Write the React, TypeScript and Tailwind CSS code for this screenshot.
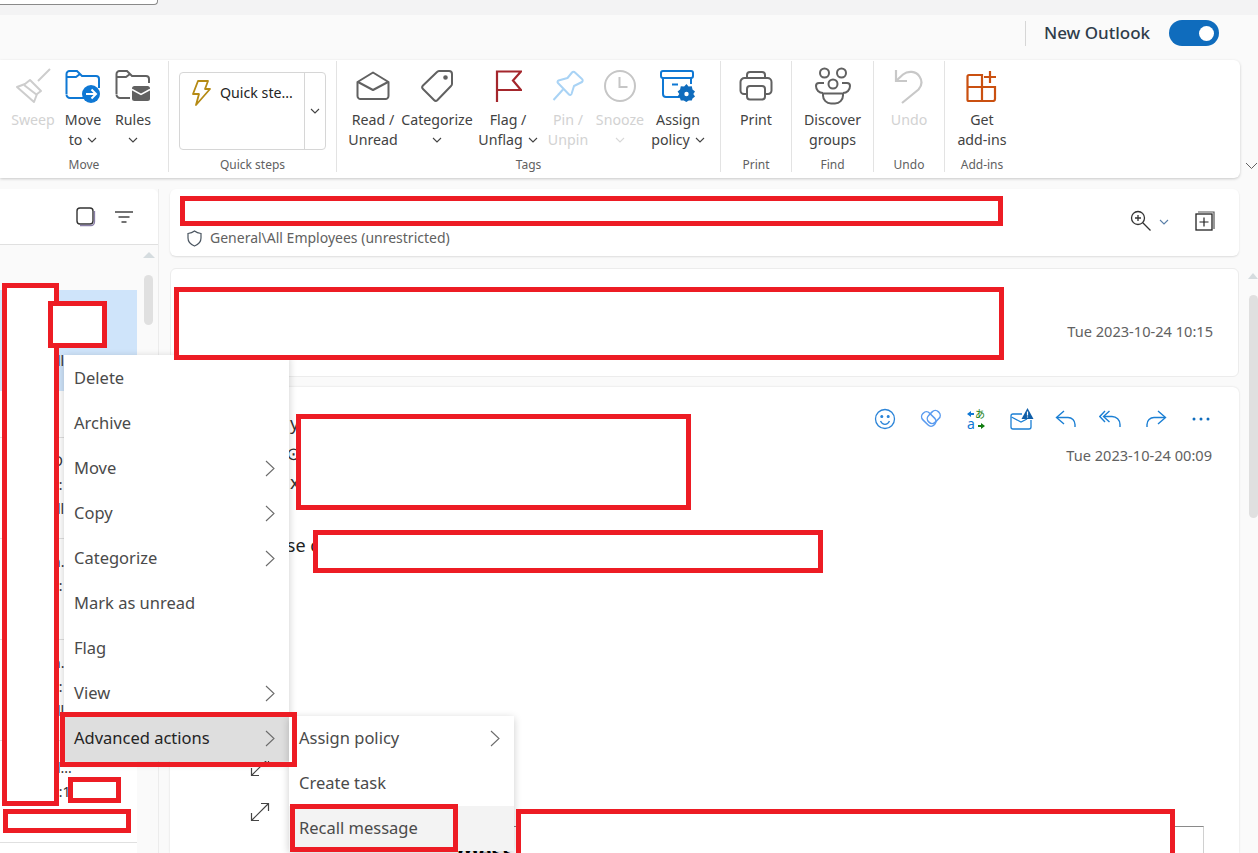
import React from "react";

const Chev = ({ c = "#424242" }: { c?: string }) => (
  <svg width="10" height="6" viewBox="0 0 10 6" className="shrink-0" fill="none">
    <path d="M1 1l4 4 4-4" stroke={c} strokeWidth="1.1" />
  </svg>
);

const MenuChev = () => (
  <svg width="10" height="17" viewBox="0 0 10 17" fill="none" className="shrink-0">
    <path d="M1 1l8 7.5-8 7.5" stroke="#6b6b6b" strokeWidth="1.1" />
  </svg>
);

const G = "#616161";
const B = "#0f78d4";
const D = "#cdcdcd";

const Sweep = () => (
  <svg width="36" height="36" viewBox="0 0 36 36" fill="none" stroke={D} strokeWidth="2" strokeLinejoin="round">
    <path d="M35 1L23 13" />
    <path d="M15 12l11 11-4 3-3 8L2 19l8-3z" />
    <path d="M9 17l13 10" />
  </svg>
);
const MoveTo = () => (
  <svg width="36" height="36" viewBox="0 0 36 36" fill="none">
    <path d="M1.500 26V6a3 3 0 0 1 3-3h7.500l5 5h14a3 3 0 0 1 3 3v9M1.500 9h9.500l4-3M19 30H5a3.500 3.500 0 0 1-3.500-3.500" stroke={B} strokeWidth="2" />
    <circle cx="26" cy="26" r="9" fill={B} />
    <path d="M21 26h9M26.500 21.500L31 26l-4.500 4.500" stroke="#fff" strokeWidth="2" />
  </svg>
);
const Rules = () => (
  <svg width="36" height="36" viewBox="0 0 36 36" fill="none">
    <path d="M1.500 26V6a3 3 0 0 1 3-3h7.500l5 5h14a3 3 0 0 1 3 3v4M1.500 9h9.500l4-3M15 30H5a3.500 3.500 0 0 1-3.500-3.500" stroke={G} strokeWidth="2" />
    <rect x="17" y="18" width="18" height="15" rx="2.500" fill={G} />
    <path d="M17 21.500l9 5 9-5" stroke="#fff" strokeWidth="1.500" />
  </svg>
);
const Bolt = () => (
  <svg width="20" height="26" viewBox="0 0 20 26" fill="none">
    <path d="M7 1h10l-3 8h5L5 25l3-11H2z" stroke="#b58a14" strokeWidth="1.800" strokeLinejoin="round" />
  </svg>
);
const Envelope = () => (
  <svg width="34" height="30" viewBox="0 0 34 30" fill="none" stroke={G} strokeWidth="2" strokeLinejoin="round">
    <path d="M1.500 11L17 1.500 32.500 11v14a3 3 0 0 1-3 3h-25a3 3 0 0 1-3-3z" />
    <path d="M2 11l15 8 15-8" />
  </svg>
);
const TagIcon = () => (
  <svg width="34" height="34" viewBox="0 0 34 34" fill="none" stroke={G} strokeWidth="2" strokeLinejoin="round">
    <path d="M19 2h10a3 3 0 0 1 3 3v10a3 3 0 0 1-1 2L17.500 31a2.500 2.500 0 0 1-3.500 0L3 20a2.500 2.500 0 0 1 0-3.500L17 3a3 3 0 0 1 2-1z" />
    <circle cx="25.500" cy="8.500" r="1.300" fill={G} />
  </svg>
);
const FlagIcon = () => (
  <svg width="28" height="32" viewBox="0 0 28 32" fill="none" stroke="#a4262c" strokeWidth="2.200">
    <path d="M3 32V1.500h24l-8 9 8 9.500H3" />
  </svg>
);
const PinIcon = () => (
  <svg width="32" height="32" viewBox="0 0 32 32" fill="none" stroke="#a9d3f5" strokeWidth="2" strokeLinejoin="round">
    <path d="M20 2.500a2 2 0 0 1 3 0l7 6.500a2 2 0 0 1 0 3l-8 4-2.500 8a1.500 1.500 0 0 1-2.500.5L6 13a1.500 1.500 0 0 1 .5-2.500l9-2.500z" />
    <path d="M11 19.500L1.500 30" />
  </svg>
);
const ClockIcon = () => (
  <svg width="34" height="34" viewBox="0 0 34 34" fill="none" stroke="#c6c6c6" strokeWidth="2">
    <circle cx="17" cy="17" r="15" />
    <path d="M16.500 8v10h8" />
  </svg>
);
const PolicyIcon = () => (
  <svg width="36" height="32" viewBox="0 0 36 32" fill="none">
    <rect x="1" y="1" width="32" height="7" rx="2" stroke={B} strokeWidth="2" />
    <path d="M3 8v16a3 3 0 0 0 3 3h13M31 8v6M12 14.500h6" stroke={B} strokeWidth="2" />
    <path d="M26.500 14l2 2.500 3.300-.3.700 3.200 2.500 2.100-1.700 2.500 1.700 2.500-2.500 2.100-.7 1.900h-3l-2.500 1.500-2.500-1.500h-3l-.7-1.900-2.500-2.100 1.700-2.500-1.700-2.500 2.500-2.100.7-3.200 3.300.3z" fill="#0f6cbd" />
    <circle cx="26.500" cy="24" r="2.200" fill="#fff" />
  </svg>
);
const PrinterIcon = () => (
  <svg width="34" height="30" viewBox="0 0 34 30" fill="none" stroke={G} strokeWidth="2" strokeLinejoin="round">
    <path d="M8 7V4a3 3 0 0 1 3-3h12a3 3 0 0 1 3 3v3" />
    <path d="M8 23H5a3.500 3.500 0 0 1-3.500-3.500V11A4 4 0 0 1 5.500 7h23a4 4 0 0 1 4 4v8.500A3.500 3.500 0 0 1 29 23h-3" />
    <rect x="8" y="15" width="18" height="13.500" rx="3" />
  </svg>
);
const GroupsIcon = () => (
  <svg width="38" height="38" viewBox="0 0 38 38" fill="none" stroke={G} strokeWidth="2">
    <circle cx="10.500" cy="6" r="4.500" />
    <circle cx="27.500" cy="6" r="4.500" />
    <circle cx="19" cy="17" r="4.500" />
    <path d="M9 26c-4 0-7-3-7-7 0-2 1-3 3-3h5M29 26c4 0 7-3 7-7 0-2-1-3-3-3h-5" />
    <path d="M9 26.500h20v2a8 8 0 0 1-8 8h-4a8 8 0 0 1-8-8z" />
  </svg>
);
const UndoIcon = () => (
  <svg width="30" height="36" viewBox="0 0 30 36" fill="none" stroke="#c8c8c8" strokeWidth="2.200">
    <path d="M2 2v11h11" />
    <path d="M2.500 12.500L9 6.500c5-4 13-3.500 16.500 2 3 4.500 2 9.500-1 13L8 35" />
  </svg>
);
const AddInIcon = () => (
  <svg width="32" height="32" viewBox="0 0 32 32" fill="none" stroke="#ca5010" strokeWidth="2.200">
    <path d="M16 5H3a1.500 1.500 0 0 0-1.500 1.500v23.500a1 1 0 0 0 1 1H27a2 2 0 0 0 2-2V17H16zM16 5v26M1.500 17H16" />
    <path d="M24 1v12M18 7h12" />
  </svg>
);

type Line = { t: string; chev?: boolean };
const Btn = ({ w, icon, lines, chevOnly, off }: { w: string; icon: React.ReactNode; lines: Line[]; chevOnly?: boolean; off?: boolean }) => (
  <div className={`${w} flex flex-col items-center shrink-0 text-[14.200px] leading-[20px] whitespace-nowrap ${off ? "text-[#d2d2d2]" : "text-[#424242]"}`}>
    <div className="h-[48px] pt-[2px] flex items-center justify-center">{icon}</div>
    <div className="h-[1px]" />
    {lines.map((l) => (
      <div key={l.t} className="flex items-center gap-[5px]">
        <span>{l.t}</span>
        {l.chev && <Chev />}
      </div>
    ))}
    {chevOnly && (
      <div className="h-[20px] flex items-center">
        <Chev c={off ? "#d8d8d8" : "#424242"} />
      </div>
    )}
  </div>
);

const Group = ({ w, label, children, border = true }: { w: string; label: string; children: React.ReactNode; border?: boolean }) => (
  <div className={`${w} h-[111px] shrink-0 flex flex-col ${border ? "border-r border-[#e3e3e3]" : ""}`}>
    <div className="flex flex-1 min-h-0">{children}</div>
    <div className="h-[16px] text-center text-[12px] leading-[18px] text-[#616161] whitespace-nowrap">{label}</div>
  </div>
);

const ListItem = ({ lines, selected, h, pt = "pt-[11px]" }: { lines: string[]; selected?: boolean; h: string; pt?: string }) => (
  <div className={`${h} ${pt} shrink-0 pl-[52px] text-[14px] leading-[24px] text-[#333] whitespace-nowrap overflow-hidden border-b ${selected ? "bg-[#cfe4fa] border-[#cfe4fa]" : "bg-white border-[#e0e0e0]"}`}>
    {lines.map((l, i) => (
      <div key={i}>{l}</div>
    ))}
  </div>
);

const Smile = () => (
  <svg width="22" height="22" viewBox="0 0 22 22" fill="none" stroke="#2b84d8" strokeWidth="1.300">
    <circle cx="11" cy="11" r="9.500" />
    <path d="M6.500 13c1 2.300 2.800 3.300 4.500 3.300s3.500-1 4.500-3.300" />
    <circle cx="7.800" cy="8.500" r=".9" fill="#2b84d8" />
    <circle cx="14.200" cy="8.500" r=".9" fill="#2b84d8" />
  </svg>
);
const Viva = () => (
  <svg width="22" height="22" viewBox="0 0 22 22" fill="none" stroke="#5a9bef" strokeWidth="1.500">
    <rect x="4" y="3" width="9.500" height="16" rx="4.500" transform="rotate(-45 8.750 11)" />
    <rect x="9" y="2" width="9.500" height="14" rx="4.500" transform="rotate(45 13.750 9)" />
  </svg>
);
const Translate = () => (
  <svg width="22" height="22" viewBox="0 0 22 22" className="overflow-visible">
    <text x="9" y="10" fontSize="10" fill="#107c10" fontFamily="'Noto Sans CJK JP',sans-serif">あ</text>
    <text x="1" y="21" fontSize="14" fill="#0f78d4" fontFamily="'Noto Sans',sans-serif">a</text>
    <path d="M1 6l4-3v2h3v2H5v2z" fill="#0f78d4" />
    <path d="M19 18l-4 3v-2h-3v-2h3v-2z" fill="#107c10" />
  </svg>
);
const MailAlert = () => (
  <svg width="24" height="22" viewBox="0 0 24 22" fill="none">
    <path d="M12 6H3a2 2 0 0 0-2 2v11a2 2 0 0 0 2 2h16a2 2 0 0 0 2-2v-7" stroke="#1b7fd4" strokeWidth="1.300" />
    <path d="M1.500 9l9.500 5 6-3" stroke="#1b7fd4" strokeWidth="1.300" />
    <path d="M17.500 0l6 11h-12z" fill="#0f5ea8" />
    <path d="M17.500 3.500v4M17.500 8.500v1" stroke="#fff" strokeWidth="1.200" />
  </svg>
);
const Reply = () => (
  <svg width="22" height="18" viewBox="0 0 22 18" fill="none" stroke="#1b7fd4" strokeWidth="1.400">
    <path d="M9 1L1.500 7.500 9 14" />
    <path d="M2 7.500h11a7 7 0 0 1 7 7V17" />
  </svg>
);
const ReplyAll = () => (
  <svg width="22" height="18" viewBox="0 0 22 18" fill="none" stroke="#1b7fd4" strokeWidth="1.400">
    <path d="M6 1L0.800 6.500 6 12" />
    <path d="M10.500 1L4.500 6.500 10.500 12" />
    <path d="M5 6.500h8a8 8 0 0 1 8 8V17" />
  </svg>
);
const Forward = () => (
  <svg width="22" height="18" viewBox="0 0 22 18" fill="none" stroke="#1b7fd4" strokeWidth="1.400">
    <path d="M13 1l7.500 6.500L13 14" />
    <path d="M20 7.500H9a7 7 0 0 0-7 7V17" />
  </svg>
);
const Dots = () => (
  <svg width="18" height="4" viewBox="0 0 18 4" fill="#0f6cbd">
    <circle cx="2" cy="2" r="1.500" />
    <circle cx="9" cy="2" r="1.500" />
    <circle cx="16" cy="2" r="1.500" />
  </svg>
);
const Expand = () => (
  <svg width="20" height="20" viewBox="0 0 20 20" fill="none" stroke="#444" strokeWidth="1.200">
    <path d="M1.500 18.500L18.500 1.500M11 1.500h7.500V9M1.500 11v7.500H9" />
  </svg>
);
const Shield = () => (
  <svg width="15" height="17" viewBox="0 0 15 17" fill="none" stroke="#4a5560" strokeWidth="1.200">
    <path d="M7.500 1C5.500 2.700 3.500 3.300 1 3.500V8c0 3.500 2.500 6.500 6.500 8 4-1.500 6.500-4.500 6.500-8V3.500C11.500 3.300 9.500 2.700 7.500 1z" />
  </svg>
);
const ZoomIcon = () => (
  <svg width="22" height="21" viewBox="0 0 22 21" fill="none" stroke="#333" strokeWidth="1.300">
    <circle cx="8" cy="8" r="6.500" />
    <path d="M12.800 12.800L20.500 20.500M8 5v6M5 8h6" />
  </svg>
);
const PopOut = () => (
  <svg width="20" height="20" viewBox="0 0 20 20" fill="none">
    <path d="M3 1h16v17" stroke="#555" strokeWidth="1.200" />
    <rect x="1" y="3" width="16" height="16" stroke="#222" strokeWidth="1.300" />
    <path d="M9 6.500v9M4.500 11h9" stroke="#222" strokeWidth="1.200" />
  </svg>
);

const menuRows: { t: string; more?: boolean }[] = [
  { t: "Delete" },
  { t: "Archive" },
  { t: "Move", more: true },
  { t: "Copy", more: true },
  { t: "Categorize", more: true },
  { t: "Mark as unread" },
  { t: "Flag" },
  { t: "View", more: true },
];

export default function App() {
  return (
    <div className="relative w-[1258px] h-[853px] overflow-hidden bg-[#fafafa] flex flex-col font-['Noto_Sans',sans-serif]">
      {/* window strip */}
      <div className="h-[15px] shrink-0 bg-[#f3f3f4]">
        <div className="w-[158px] h-[5px] bg-white border-b border-r border-[#8a8a8a] rounded-br-[4px]" />
      </div>

      {/* top bar */}
      <div className="h-[45px] shrink-0 flex items-center justify-end pr-[39px] pb-[9px]">
        <div className="w-px h-[25px] bg-[#d6d6d6]" />
        <span className="ml-[18px] w-[125px] text-[17px] font-medium text-[#2f3d4a] whitespace-nowrap">New Outlook</span>
        <div className="w-[50px] h-[26px] rounded-full bg-[#0f6cbd] flex items-center justify-end pr-[5px]">
          <div className="w-[15px] h-[15px] rounded-full bg-white" />
        </div>
      </div>

      {/* ribbon */}
      <div className="h-[118px] shrink-0 flex items-start">
        <div className="w-[1240px] h-[118px] pt-px bg-white rounded-r-[6px] shadow-[0_1px_3px_rgba(0,0,0,0.2)] flex">
          <Group w="w-[169px]" label="Move">
            <div className="w-[8px] shrink-0" />
            <Btn w="w-[50px]" icon={<Sweep />} lines={[{ t: "Sweep" }]} off />
            <Btn w="w-[50px]" icon={<MoveTo />} lines={[{ t: "Move" }, { t: "to", chev: true }]} />
            <Btn w="w-[50px]" icon={<Rules />} lines={[{ t: "Rules" }]} chevOnly />
          </Group>
          <Group w="w-[168px]" label="Quick steps">
            <div className="ml-[10px] mt-[11px] w-[147px] h-[78px] border border-[#d6d6d6] rounded-[4px] flex">
              <div className="flex-1 flex items-start gap-[9px] pl-[11px] pt-[7px]">
                <Bolt />
                <span className="text-[14.200px] leading-[26px] text-[#242424] whitespace-nowrap">Quick ste...</span>
              </div>
              <div className="w-[21px] border-l border-[#d6d6d6] flex items-center justify-center">
                <Chev />
              </div>
            </div>
          </Group>
          <Group w="w-[384px]" label="Tags">
            <Btn w="w-[72px]" icon={<Envelope />} lines={[{ t: "Read /" }, { t: "Unread" }]} />
            <Btn w="w-[56px]" icon={<TagIcon />} lines={[{ t: "Categorize" }]} chevOnly />
            <Btn w="w-[86px]" icon={<FlagIcon />} lines={[{ t: "Flag /" }, { t: "Unflag", chev: true }]} />
            <Btn w="w-[34px]" icon={<PinIcon />} lines={[{ t: "Pin /" }, { t: "Unpin" }]} off />
            <Btn w="w-[70px]" icon={<ClockIcon />} lines={[{ t: "Snooze" }]} chevOnly off />
            <Btn w="w-[46px]" icon={<PolicyIcon />} lines={[{ t: "Assign" }, { t: "policy", chev: true }]} />
          </Group>
          <Group w="w-[71px]" label="Print">
            <Btn w="w-[70px]" icon={<PrinterIcon />} lines={[{ t: "Print" }]} />
          </Group>
          <Group w="w-[82px]" label="Find">
            <Btn w="w-[81px]" icon={<GroupsIcon />} lines={[{ t: "Discover" }, { t: "groups" }]} />
          </Group>
          <Group w="w-[71px]" label="Undo">
            <Btn w="w-[70px]" icon={<UndoIcon />} lines={[{ t: "Undo" }]} off />
          </Group>
          <Group w="w-[74px]" label="Add-ins" border={false}>
            <Btn w="w-[74px]" icon={<AddInIcon />} lines={[{ t: "Get" }, { t: "add-ins" }]} />
          </Group>
        </div>
        <div className="ml-[5px] mt-[102px]">
          <svg width="13" height="8" viewBox="0 0 13 8" fill="none">
            <path d="M1 1l5.500 5.500L12 1" stroke="#616161" strokeWidth="1" />
          </svg>
        </div>
      </div>

      {/* main */}
      <div className="mt-[11px] flex-1 min-h-0 flex">
        {/* message list */}
        <div className="w-[159px] shrink-0 flex flex-col border-r border-[#ececec]">
          <div className="h-[56px] shrink-0 bg-white rounded-tr-[6px] border-b border-[#e0e0e0] flex items-center justify-end pr-[25px] gap-[19px]">
            <svg width="20" height="20" viewBox="0 0 20 20" fill="none">
              <rect x="1" y="1" width="16" height="16" rx="3" stroke="#333" strokeWidth="1.400" />
              <path d="M18.500 4v11a3.500 3.500 0 0 1-3.500 3.500H4" stroke="#8a7fa8" strokeWidth="1.300" />
            </svg>
            <svg width="18" height="12" viewBox="0 0 18 12" fill="none" stroke="#444" strokeWidth="1.500">
              <path d="M0 1h18M3.500 6h11M6.500 11h5" />
            </svg>
          </div>
          <div className="flex-1 min-h-0 flex">
            <div className="w-[137px] shrink-0 flex flex-col pt-[45px]">
              <ListItem h="h-[101px]" selected lines={["\u00a0", "\u00a0", "dl"]} />
              <ListItem h="h-[47px]" lines={["\u00a0"]} />
              <ListItem h="h-[101px]" lines={["O", "s:", "dl"]} />
              <ListItem h="h-[101px]" lines={["n.", "s:", "i."]} />
              <ListItem h="h-[101px]" lines={["n.", "s:", "dl"]} />
              <ListItem h="h-[102px]" pt="pt-[15px]" lines={["d...", "s:1"]} />
              <div className="flex-1 bg-white" />
            </div>
            <div className="flex-1 flex flex-col items-center pt-[7px] pl-[2px]">
              <div className="w-0 h-0 border-x-[6px] border-x-transparent border-b-[6px] border-b-[#d5dcdf]" />
              <div className="mt-[17px] w-[9px] h-[50px] rounded-full bg-[#e0e0e0]" />
            </div>
          </div>
        </div>

        {/* reading pane */}
        <div className="ml-[11px] w-[1069px] shrink-0 flex flex-col">
          <div className="h-[67px] shrink-0 bg-white rounded-[6px] shadow-[0_1px_2px_rgba(0,0,0,0.12)] flex items-start justify-between pl-[17px] pr-[24px] pt-[21px]">
            <div className="mt-[19px] flex items-center gap-[8px] text-[14px] leading-[18px] text-[#616161] whitespace-nowrap">
              <Shield />
              <span>General\All Employees (unrestricted)</span>
            </div>
            <div className="flex items-center">
              <ZoomIcon />
              <div className="ml-[7px] mt-[3px]">
                <Chev c="#5a7fa8" />
              </div>
              <div className="ml-[26px]">
                <PopOut />
              </div>
            </div>
          </div>
          <div className="mt-[12px] h-[109px] shrink-0 bg-white rounded-[6px] border border-[#ececec] flex items-center justify-end pr-[25px] pt-[18px] text-[14.600px] text-[#616161]">
            Tue 2023-10-24 10:15
          </div>
          <div className="mt-[10px] flex-1 min-h-0 bg-white rounded-t-[6px] shadow-[0_0_2px_rgba(0,0,0,0.15)] overflow-hidden relative">
            <div className="flex justify-between">
              <div className="pl-[120px] pt-[22px] text-[18px] leading-[29.500px] text-[#333]">
                <div>y</div>
                <div className="-ml-[4px]">⊙</div>
                <div>x</div>
              </div>
              <div className="pr-[27px] pt-[20px] flex flex-col items-end">
                <div className="flex items-center h-[24px] mr-[2px]">
                  <Smile />
                  <div className="ml-[24px]"><Viva /></div>
                  <div className="ml-[24px]"><Translate /></div>
                  <div className="ml-[22px]"><MailAlert /></div>
                  <div className="ml-[21px]"><Reply /></div>
                  <div className="ml-[22px]"><ReplyAll /></div>
                  <div className="ml-[24px]"><Forward /></div>
                  <div className="ml-[25px]"><Dots /></div>
                </div>
                <div className="mt-[14px] text-[14.600px] leading-[20px] text-[#616161]">Tue 2023-10-24 00:09</div>
              </div>
            </div>
            <div className="mt-[34px] ml-[81px] text-[18px] leading-[26px] text-[#222]">Please c</div>
            <div className="mt-[268px] ml-[270px] w-[764px] h-[60px] border-t border-r border-t-[#8a8a8a] border-r-[#d0d0d0] pl-[17px] pt-[8px] text-[22px] font-bold text-black">
              mess
            </div>
          </div>
        </div>

        {/* page scrollbar */}
        <div className="flex-1 flex flex-col items-center pt-[84px] pl-[9px]">
          <div className="w-0 h-0 border-x-[5px] border-x-transparent border-b-[6px] border-b-[#d5dcdf]" />
          <div className="mt-[16px] w-[9px] h-[223px] rounded-full bg-[#e0e0e0]" />
        </div>
      </div>

      {/* stray expand icons over the message */}
      <div className="absolute left-[250px] top-[757px]"><Expand /></div>
      <div className="absolute left-[250px] top-[802px]"><Expand /></div>

      {/* context menu */}
      <div className="absolute left-[64px] top-[355px] w-[225px] pt-[1px] bg-white shadow-[0_2px_8px_rgba(0,0,0,0.2)] text-[16.500px] text-[#4a4a4a]">
        {menuRows.map((r) => (
          <div key={r.t} className="h-[45px] pl-[10px] pr-[14px] flex items-center justify-between">
            <span>{r.t}</span>
            {r.more && <MenuChev />}
          </div>
        ))}
        <div className="h-[45px] pl-[10px] pr-[14px] flex items-center justify-between bg-[#dedede] text-[#242424]">
          <span>Advanced actions</span>
          <MenuChev />
        </div>
      </div>

      {/* submenu */}
      <div className="absolute left-[289px] top-[716px] w-[225px] bg-white shadow-[0_2px_8px_rgba(0,0,0,0.2)] text-[16.500px] text-[#4a4a4a]">
        <div className="h-[45px] pl-[10px] pr-[14px] flex items-center justify-between">
          <span>Assign policy</span>
          <MenuChev />
        </div>
        <div className="h-[45px] pl-[10px] flex items-center">Create task</div>
        <div className="h-[45px] pl-[10px] flex items-center bg-[#f3f3f3]">Recall message</div>
      </div>

      {/* red annotation boxes */}
      <div className="absolute left-[180px] top-[196px] w-[823px] h-[30px] border-[5px] border-[#ed1c24] bg-white" />
      <div className="absolute left-[174px] top-[287px] w-[830px] h-[73px] border-[5px] border-[#ed1c24] bg-white" />
      <div className="absolute left-[296px] top-[414px] w-[395px] h-[96px] border-[5px] border-[#ed1c24] bg-white" />
      <div className="absolute left-[313px] top-[530px] w-[510px] h-[43px] border-[5px] border-[#ed1c24] bg-white" />
      <div className="absolute left-[2px] top-[283px] w-[57px] h-[523px] border-[5px] border-[#ed1c24] bg-white" />
      <div className="absolute left-[48px] top-[301px] w-[59px] h-[47px] border-[5px] border-[#ed1c24] bg-white" />
      <div className="absolute left-[60px] top-[712px] w-[237px] h-[55px] border-[5px] border-[#ed1c24]" />
      <div className="absolute left-[68px] top-[777px] w-[53px] h-[26px] border-[5px] border-[#ed1c24] bg-white" />
      <div className="absolute left-[3px] top-[809px] w-[128px] h-[24px] border-[5px] border-[#ed1c24] bg-white" />
      <div className="absolute left-[290px] top-[804px] w-[168px] h-[48px] border-[5px] border-[#ed1c24]" />
      <div className="absolute left-[516px] top-[809px] w-[659px] h-[60px] border-[5px] border-[#ed1c24] bg-white" />
    </div>
  );
}
